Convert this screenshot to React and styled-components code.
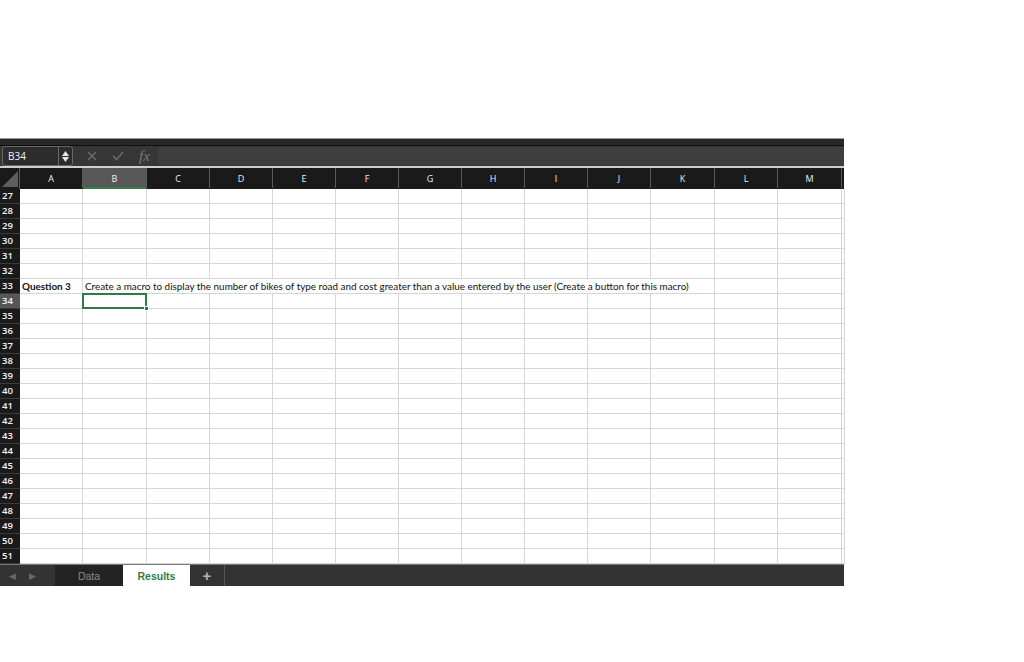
import React from 'react';
import styled, { createGlobalStyle } from 'styled-components';

const Global = createGlobalStyle`
  html, body { margin: 0; padding: 0; background: #fff; }
  * { box-sizing: border-box; }
`;

const COLS = ['A', 'B', 'C', 'D', 'E', 'F', 'G', 'H', 'I', 'J', 'K', 'L', 'M'];
const WIDTHS = [63, 64, 63, 63, 63, 63, 63, 63, 63, 63, 64, 63, 64];
const ROWS = Array.from({ length: 25 }, (_, i) => 27 + i);
const TEMPLATE = `20px ${WIDTHS.map((w) => w + 'px').join(' ')} 2px`;

const QUESTION =
  'Create a macro to display the number of bikes of type road and cost greater than a value entered by the user (Create a button for this macro)';

const Page = styled.div`
  padding-top: 138px;
  width: 844px;
  font-family: Lato, "Open Sans", sans-serif;
`;

const Sheet = styled.div`
  width: 844px;
  background: #fff;
`;

const TopStrip = styled.div`
  height: 8px;
  background: #272727;
  border-top: 1px solid #9c9c9c;
  border-bottom: 1px solid #0e0e0e;
`;

const FormulaBar = styled.div`
  height: 22px;
  background: #363636;
  display: flex;
  align-items: center;
  padding: 1px 0 1px 2px;
  border-bottom: 2px solid #cfcfcf;
`;

const NameBox = styled.div`
  width: 71px;
  height: 20px;
  display: flex;
  border: 1px solid #686868;
  border-radius: 3px;
  background: #2c2c2c;
`;

const NameText = styled.div`
  flex: 1;
  color: #f2f2f2;
  font-family: "Open Sans", sans-serif;
  font-size: 10px;
  line-height: 18px;
  padding-left: 5px;
`;

const Stepper = styled.div`
  width: 14px;
  border-left: 1px solid #686868;
  display: flex;
  flex-direction: column;
  align-items: center;
  justify-content: center;
  gap: 1px;
`;

const Actions = styled.div`
  display: flex;
  align-items: center;
  gap: 15px;
  padding-left: 14px;
  width: 85px;
`;

const Fx = styled.span`
  font-family: "Liberation Serif", serif;
  font-style: italic;
  font-size: 15px;
  color: #7a7a7a;
`;

const FormulaInput = styled.div`
  flex: 1;
  height: 18px;
  background: #3e3e3e;
  border-radius: 3px 0 0 3px;
`;

const Grid = styled.div`
  display: grid;
  grid-template-columns: ${TEMPLATE};
  grid-template-rows: 21px;
  grid-auto-rows: 15px;
`;

const Corner = styled.div`
  background: #1a1a1a;
  border-right: 1px solid #5a5a5a;
  position: relative;
  overflow: hidden;
`;

const ColHead = styled.div`
  background: ${(p) => (p.$active ? '#575757' : '#1a1a1a')};
  border-right: 1px solid #5a5a5a;
  border-bottom: 2px solid ${(p) => (p.$active ? '#2e7d4a' : '#1a1a1a')};
  color: #f0f0f0;
  font-family: "Open Sans", sans-serif;
  font-size: 9px;
  display: flex;
  align-items: center;
  justify-content: center;
  padding-top: 2px;
`;

const EndHead = styled.div`
  background: #1a1a1a;
`;

const RowHead = styled.div`
  background: ${(p) => (p.$active ? '#575757' : '#1a1a1a')};
  border-bottom: 1px solid #3a3a3a;
  color: #f4f4f4;
  font-family: "Open Sans", sans-serif;
  font-weight: 600;
  font-size: 9.5px;
  line-height: 14px;
  padding-left: 2px;
`;

const Cell = styled.div`
  grid-column: ${(p) => (p.$span ? `span ${p.$span}` : 'auto')};
  border-right: 1px solid #d6d6d6;
  border-bottom: 1px solid #d6d6d6;
  font-size: 9.9px;
  line-height: 14px;
  padding-left: 2px;
  white-space: nowrap;
  color: #111;
  font-weight: ${(p) => (p.$bold ? 700 : 400)};
  position: relative;
`;

const Selection = styled.div`
  position: absolute;
  left: -1px;
  top: -1px;
  right: -1px;
  bottom: -1px;
  border: 2px solid #2f7a47;
  z-index: 2;
`;

const Handle = styled.div`
  position: absolute;
  right: -4px;
  bottom: -4px;
  width: 5px;
  height: 5px;
  background: #2f7a47;
  border: 1px solid #fff;
`;

const TabBar = styled.div`
  height: 22px;
  background: #333;
  border-top: 1px solid #7a7a7a;
  display: flex;
  align-items: stretch;
`;

const Nav = styled.div`
  width: 55px;
  display: flex;
  align-items: center;
  gap: 13px;
  padding-left: 9px;
  color: #676767;
  font-size: 9px;
`;

const Tab = styled.div`
  width: ${(p) => p.$w}px;
  display: flex;
  align-items: center;
  justify-content: center;
  font-family: "Liberation Sans", Arial, sans-serif;
  font-size: 10.5px;
  background: ${(p) => (p.$active ? '#fff' : p.$dark ? '#232323' : '#333')};
  color: ${(p) => (p.$active ? '#2e7d46' : '#8a8a8a')};
  font-weight: ${(p) => (p.$active ? 700 : 400)};
  border-right: ${(p) => (p.$sep ? '1px solid #555' : 'none')};
`;

const Plus = styled.span`
  color: #b4b4b4;
  font-size: 15px;
  font-weight: 700;
  line-height: 1;
`;

function Arrow({ up }) {
  return (
    <svg width="7" height="5" viewBox="0 0 7 5">
      <path d={up ? 'M3.5 0 L7 5 L0 5 Z' : 'M0 0 L7 0 L3.5 5 Z'} fill="#e6e6e6" />
    </svg>
  );
}

function Row({ r }) {
  if (r === 33) {
    return (
      <>
        <RowHead>{r}</RowHead>
        <Cell $bold>Question 3</Cell>
        <Cell $span={10}>{QUESTION}</Cell>
        <Cell />
        <Cell />
        <Cell />
      </>
    );
  }
  return (
    <>
      <RowHead $active={r === 34}>{r}</RowHead>
      {COLS.map((c) => (
        <Cell key={c}>
          {r === 34 && c === 'B' && (
            <Selection>
              <Handle />
            </Selection>
          )}
        </Cell>
      ))}
      <Cell />
    </>
  );
}

export default function App() {
  return (
    <Page>
      <Global />
      <Sheet>
        <TopStrip />
        <FormulaBar>
          <NameBox>
            <NameText>B34</NameText>
            <Stepper>
              <Arrow up />
              <Arrow />
            </Stepper>
          </NameBox>
          <Actions>
            <svg width="10" height="10" viewBox="0 0 10 10">
              <path d="M1 1 L9 9 M9 1 L1 9" stroke="#6a6a6a" strokeWidth="1.6" />
            </svg>
            <svg width="12" height="10" viewBox="0 0 12 10">
              <path d="M1 5 L4.5 8.5 L11 1" stroke="#6a6a6a" strokeWidth="1.6" fill="none" />
            </svg>
            <Fx>fx</Fx>
          </Actions>
          <FormulaInput />
        </FormulaBar>
        <Grid>
          <Corner>
            <svg width="20" height="21" viewBox="0 0 20 21" style={{ position: 'absolute', left: 0, top: 0 }}>
              <path d="M18 3 L18 19 L2 19 Z" fill="#5e5e5e" />
            </svg>
          </Corner>
          {COLS.map((c) => (
            <ColHead key={c} $active={c === 'B'}>{c}</ColHead>
          ))}
          <EndHead />
          {ROWS.map((r) => (
            <Row key={r} r={r} />
          ))}
        </Grid>
        <TabBar>
          <Nav>
            <span>◀</span>
            <span>▶</span>
          </Nav>
          <Tab $w={68} $dark>Data</Tab>
          <Tab $w={67} $active>Results</Tab>
          <Tab $w={35} $sep><Plus>+</Plus></Tab>
        </TabBar>
      </Sheet>
    </Page>
  );
}
